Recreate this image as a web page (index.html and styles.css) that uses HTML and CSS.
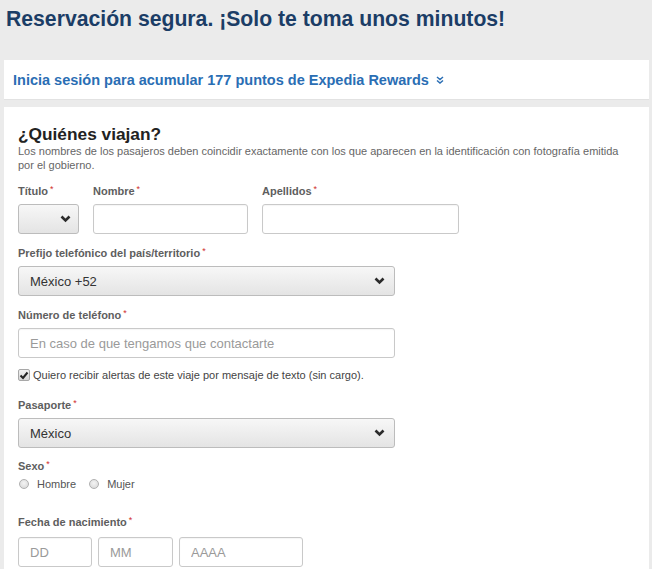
FILE: index.html
```html
<!DOCTYPE html>
<html lang="es">
<head>
<meta charset="utf-8">
<title>Reservación segura</title>
<link rel="stylesheet" href="styles.css">
</head>
<body>
<h1 class="page-title">Reservación segura. ¡Solo te toma unos minutos!</h1>

<div class="rewards">
  <a class="rewards-link" href="#">Inicia sesión para acumular 177 puntos de Expedia Rewards</a>
  <svg class="dbl-chevron" width="8" height="8" viewBox="0 0 8 8"><path d="M1 1 L4 3.5 L7 1 M1 4.5 L4 7 L7 4.5" fill="none" stroke="#2a6eb4" stroke-width="1.5"/></svg>
</div>

<div class="card">
  <h2 class="section-title">¿Quiénes viajan?</h2>
  <p class="desc">Los nombres de los pasajeros deben coincidir exactamente con los que aparecen en la identificación con fotografía emitida por el gobierno.</p>

  <div class="name-row">
    <div class="col col-title">
      <div class="label">Título<span class="req">*</span></div>
      <div class="select select-small">
        <span></span>
        <svg class="chev" width="11" height="8" viewBox="0 0 11 8"><path d="M1.5 1.5 L5.5 5.5 L9.5 1.5" fill="none" stroke="#2b2b2b" stroke-width="2.6"/></svg>
      </div>
    </div>
    <div class="col col-name">
      <div class="label">Nombre<span class="req">*</span></div>
      <input class="input" type="text">
    </div>
    <div class="col col-last">
      <div class="label">Apellidos<span class="req">*</span></div>
      <input class="input" type="text">
    </div>
  </div>

  <div class="field">
    <div class="label">Prefijo telefónico del país/territorio<span class="req">*</span></div>
    <div class="select select-wide">
      <span>México +52</span>
      <svg class="chev" width="11" height="8" viewBox="0 0 11 8"><path d="M1.5 1.5 L5.5 5.5 L9.5 1.5" fill="none" stroke="#2b2b2b" stroke-width="2.6"/></svg>
    </div>
  </div>

  <div class="field">
    <div class="label">Número de teléfono<span class="req">*</span></div>
    <input class="input input-wide" type="text" placeholder="En caso de que tengamos que contactarte">
  </div>

  <label class="check-row">
    <span class="checkbox"><svg width="10" height="9" viewBox="0 0 10 9"><path d="M1.5 4.5 L4 7 L8.5 1.5" fill="none" stroke="#222" stroke-width="2"/></svg></span>
    <span>Quiero recibir alertas de este viaje por mensaje de texto (sin cargo).</span>
  </label>

  <div class="field field-passport">
    <div class="label">Pasaporte<span class="req">*</span></div>
    <div class="select select-wide">
      <span>México</span>
      <svg class="chev" width="11" height="8" viewBox="0 0 11 8"><path d="M1.5 1.5 L5.5 5.5 L9.5 1.5" fill="none" stroke="#2b2b2b" stroke-width="2.6"/></svg>
    </div>
  </div>

  <div class="field field-sex">
    <div class="label label-tight">Sexo<span class="req">*</span></div>
    <div class="radio-row">
      <label class="radio-opt"><span class="radio"></span>Hombre</label>
      <label class="radio-opt"><span class="radio"></span>Mujer</label>
    </div>
  </div>

  <div class="field field-dob">
    <div class="label label-dob">Fecha de nacimiento<span class="req">*</span></div>
    <div class="dob-row">
      <input class="input dob-d" type="text" placeholder="DD">
      <input class="input dob-m" type="text" placeholder="MM">
      <input class="input dob-y" type="text" placeholder="AAAA">
    </div>
  </div>
</div>
</body>
</html>
```

FILE: styles.css
```css
* { box-sizing: border-box; }

html, body {
  margin: 0;
  padding: 0;
}

body {
  background: #ebebeb;
  font-family: "Liberation Sans", Arial, sans-serif;
  color: #333;
  overflow: hidden;
  height: 569px;
}

.page-title {
  margin: 7px 0 0 6px;
  font-size: 21.2px;
  line-height: 24px;
  font-weight: bold;
  color: #1b3d66;
  height: 53px;
}

.rewards {
  margin: 0 3px 0 4px;
  height: 40px;
  background: #fff;
  display: flex;
  align-items: center;
  padding-left: 9px;
  gap: 7px;
  border-bottom: 1px solid #e2e2e2;
}

.rewards-link {
  font-size: 14.5px;
  font-weight: bold;
  color: #2a6eb4;
  text-decoration: none;
}

.dbl-chevron { display: block; margin-top: 1px; }

.card {
  margin: 7px 3px 0 4px;
  background: #fff;
  padding: 17px 24px 20px 14px;
  min-height: 470px;
}

.section-title {
  margin: 0;
  font-size: 17.3px;
  line-height: 20px;
  font-weight: bold;
  color: #222;
}

.desc {
  margin: 0;
  font-size: 11px;
  line-height: 14px;
  color: #666;
}

.label {
  font-size: 11px;
  line-height: 14px;
  font-weight: bold;
  color: #5e5e5e;
  margin-bottom: 6px;
}

.req {
  color: #d0302c;
  font-size: 9px;
  line-height: 0;
  position: relative;
  top: -3px;
  margin-left: 2px;
  font-weight: normal;
}

.name-row {
  display: flex;
  margin-top: 12px;
}

.col-title { width: 61px; margin-right: 14px; }
.col-name { width: 155px; margin-right: 14px; }
.col-last { width: 197px; }

.input {
  display: block;
  width: 100%;
  height: 30px;
  border: 1px solid #c9c9c9;
  border-radius: 3px;
  background: #fff;
  box-shadow: inset 0 1px 1px rgba(0,0,0,0.04);
  font-family: "Liberation Sans", Arial, sans-serif;
  font-size: 13px;
  color: #333;
  padding: 0 11px;
  margin: 0;
  outline: none;
}

.input::placeholder { color: #9a9a9a; }

.select {
  height: 30px;
  border: 1px solid #bcbcbc;
  border-radius: 3px;
  background: linear-gradient(#f7f7f7, #e4e4e4);
  display: flex;
  align-items: center;
  justify-content: space-between;
  padding: 0 9px 0 11px;
  font-size: 13px;
  color: #333;
}

.select-small { width: 61px; padding-right: 7px; }
.select-wide { width: 377px; }
.input-wide { width: 377px; }

.chev { display: block; }

.field { margin-top: 12px; }

.check-row {
  display: flex;
  align-items: center;
  margin-top: 10px;
  height: 14px;
  font-size: 11px;
  color: #444;
  gap: 3px;
}

.checkbox {
  width: 12px;
  height: 12px;
  border: 1px solid #a8a8a8;
  border-radius: 2px;
  background: linear-gradient(#f0f0f0, #d6d6d6);
  display: flex;
  align-items: center;
  justify-content: center;
}

.checkbox svg { display: block; }

.field-passport { margin-top: 16px; }
.field-sex { margin-top: 11px; }
.label-tight { margin-bottom: 4px; }
.label-dob { margin-bottom: 8px; }

.radio-row {
  display: flex;
  height: 14px;
  align-items: center;
  font-size: 11px;
  color: #555;
  gap: 12px;
}

.radio-opt {
  display: flex;
  align-items: center;
  gap: 8px;
  padding-left: 1px;
}

.radio {
  width: 10px;
  height: 10px;
  border-radius: 50%;
  border: 1px solid #b0b0b0;
  background: radial-gradient(circle at 50% 40%, #f4f4f4, #d4d4d4);
}

.field-dob { margin-top: 24px; }

.dob-row {
  display: flex;
  gap: 6px;
}

.dob-d { width: 74px; }
.dob-m { width: 75px; }
.dob-y { width: 124px; }
```
